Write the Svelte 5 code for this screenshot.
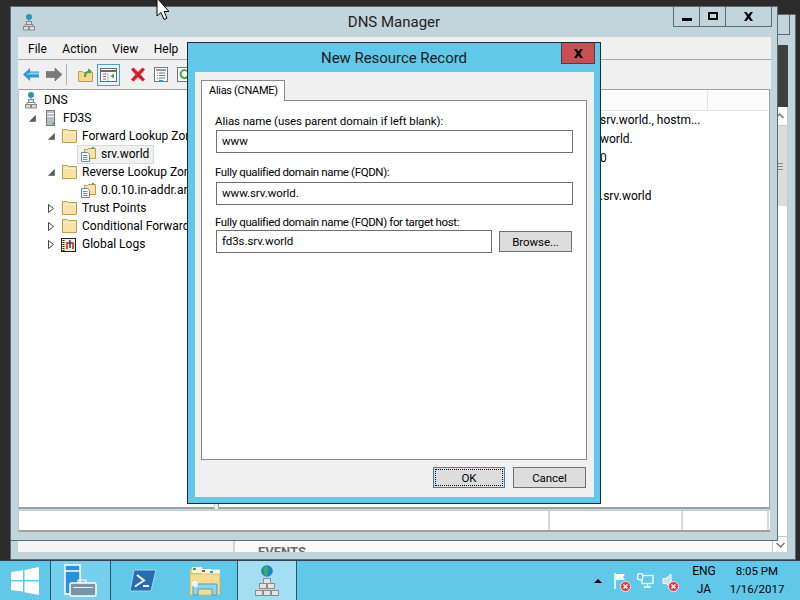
<script>
  const menus = ["File", "Action", "View", "Help"];
  const tree = [
    { label: "DNS", level: 0, icon: "dns" },
    { label: "FD3S", level: 1, icon: "server", exp: "open" },
    { label: "Forward Lookup Zones", level: 2, icon: "folder", exp: "open" },
    { label: "srv.world", level: 3, icon: "zone", selected: true },
    { label: "Reverse Lookup Zones", level: 2, icon: "folder", exp: "open" },
    { label: "0.0.10.in-addr.arpa", level: 3, icon: "zone" },
    { label: "Trust Points", level: 2, icon: "folder", exp: "closed" },
    { label: "Conditional Forwarders", level: 2, icon: "folder", exp: "closed" },
    { label: "Global Logs", level: 2, icon: "logs", exp: "closed" }
  ];
  const records = ["srv.world., hostm...", "world.", "0", "", ".srv.world"];
</script>

{#snippet dnsIcon()}
  <svg width="12" height="17" viewBox="0 0 12 17">
    <circle cx="6" cy="3" r="3" fill="#2f8fd0" />
    <path d="M4 2l2-1.5 1 1.5-1 2z" fill="#3aa845" />
    <path d="M6 6v3M2 12v-1.5h8V12" stroke="#8a8a8a" fill="none" />
    <rect x="3.5" y="7.5" width="5" height="3" fill="#ddd" stroke="#8a8a8a" />
    <rect x="0.5" y="12.5" width="5" height="3.5" fill="#ddd" stroke="#8a8a8a" />
    <rect x="6.5" y="12.5" width="5" height="3.5" fill="#ddd" stroke="#8a8a8a" />
  </svg>
{/snippet}

{#snippet folderIcon()}
  <svg width="15" height="14" viewBox="0 0 15 14">
    <path d="M.5 .5h5l1 1h8v12H.5z" fill="#f7e3a4" stroke="#b99c58" />
    <path d="M1.5 3.500h12" stroke="#fdf4d2" />
  </svg>
{/snippet}

{#snippet zoneIcon()}
  <svg width="15" height="16" viewBox="0 0 15 16">
    <path d="M3.5 3.5h3l1-1h7v10h-11z" fill="#f7e3a4" stroke="#b99c58" />
    <rect x="11" y="1" width="2" height="1.5" fill="#2f8fd0" />
    <path d="M.5 6.5h6l2 2v7h-8z" fill="#fff" stroke="#6d88a8" />
    <path d="M2 9.5h4.500M2 11.500h4.500M2 13.500h4.500" stroke="#6d88a8" />
  </svg>
{/snippet}

{#snippet serverIcon()}
  <svg width="9" height="16" viewBox="0 0 9 16">
    <rect x=".5" y=".5" width="8" height="15" fill="#b9bec2" stroke="#767b80" />
    <path d="M1 3.500h7M1 6.500h7" stroke="#f2f2f2" />
    <rect x="6" y="12.500" width="2" height="2" fill="#4cc04c" />
  </svg>
{/snippet}

{#snippet logsIcon()}
  <svg width="16" height="15" viewBox="0 0 16 15">
    <rect x=".5" y="1.500" width="14" height="13" fill="#f6efcb" stroke="#222" />
    <path d="M2.500 1v13" stroke="#222" stroke-dasharray="1 1" stroke-width="2" />
    <path d="M6 12V6h6v6" stroke="#c8201c" stroke-width="1.500" fill="none" />
    <path d="M9 3v8" stroke="#1c3fbf" stroke-width="1.500" />
  </svg>
{/snippet}

{#snippet closeGlyph()}
  <svg width="11" height="9" viewBox="0 0 11 9">
    <path d="M1 0h2.500l2 2.500 2-2.500H10L7 4.500 10 9H7.500l-2-2.500-2 2.500H1L4 4.500z" fill="#000" />
  </svg>
{/snippet}

{#snippet badge()}
  <svg class="badge" width="11" height="11" viewBox="0 0 11 11">
    <circle cx="5.500" cy="5.500" r="5" fill="#e0383c" stroke="#fff" stroke-width=".8" />
    <path d="M3.500 3.500l4 4M7.500 3.500l-4 4" stroke="#fff" stroke-width="1.500" />
  </svg>
{/snippet}

<div class="desktop">
  <div class="area">
    <section class="win back">
      <div class="back-caption"><span class="back-btn"></span><span class="back-btn wide"></span></div>
      <div class="back-client">
        <div class="banner"></div>
        <div class="back-body">
          <div class="back-main">
            <div class="back-nav"></div>
            <div class="back-content"><h3>EVENTS</h3></div>
          </div>
          <div class="vscroll">
            <div class="sb-up">
              <svg width="9" height="6" viewBox="0 0 9 6"><path d="M.5 5l4-4 4 4" fill="none" stroke="#777" stroke-width="1.500" /></svg>
            </div>
            <div class="sb-thumb"><span class="grip"></span></div>
            <div class="sb-track"></div>
            <div class="sb-down">
              <svg width="9" height="6" viewBox="0 0 9 6"><path d="M.5 1l4 4 4-4" fill="none" stroke="#777" stroke-width="1.500" /></svg>
            </div>
          </div>
        </div>
      </div>
    </section>

    <section class="win front">
      <header class="titlebar">
        <span class="app-icon">{@render dnsIcon()}</span>
        <span class="title">DNS Manager</span>
        <div class="captions">
          <span class="cap min"><i></i></span>
          <span class="cap max"><i></i></span>
          <span class="cap close">{@render closeGlyph()}</span>
        </div>
      </header>
      <div class="client">
        <nav class="menubar">
          {#each menus as m}<span>{m}</span>{/each}
        </nav>
        <div class="toolbar">
          <span class="tb">
            <svg width="16" height="13" viewBox="0 0 16 13"><path d="M0 6.500L7 0v3.500h9v6H7V13z" fill="#2f96dc" /><path d="M7 4.500h9v2H3z" fill="#8fd0f5" /></svg>
          </span>
          <span class="tb">
            <svg width="16" height="13" viewBox="0 0 16 13"><path d="M16 6.500L9 0v3.500H0v6h9V13z" fill="#7a7a7a" stroke="#5c5c5c" stroke-width=".5" /></svg>
          </span>
          <span class="tb-sep"></span>
          <span class="tb">
            <svg width="15" height="15" viewBox="0 0 15 15"><path d="M.5 4.500h4l1 1h9v9H.5z" fill="#f2d98e" stroke="#b99c58" /><path d="M6 10c0-4 2-6 4-6V1.500L14 4l-3 3V5.500c-2 .5-3 2-3 4.500z" fill="#3aa845" /></svg>
          </span>
          <span class="tb active">
            <svg width="17" height="14" viewBox="0 0 17 14">
              <rect x=".5" y=".5" width="16" height="13" fill="#fff" stroke="#6a6a6a" />
              <path d="M1 3h15" stroke="#6a6a6a" stroke-width="2" />
              <path d="M3 6h3M3 8.500h3M3 11h3" stroke="#6a6a6a" />
              <path d="M8 5v8" stroke="#aaa" />
              <path d="M14 5.500v5L10.500 8z" fill="#3aa845" />
            </svg>
          </span>
          <span class="tb gap">
            <svg width="16" height="15" viewBox="0 0 16 15"><path d="M1 2.500L3.500.5 8 5l4.500-4.500L15 2.500 10.500 7.500 15 12.500 12.500 14.500 8 10l-4.500 4.500L1 12.500l4.500-5z" fill="#dc1e24" /></svg>
          </span>
          <span class="tb">
            <svg width="14" height="15" viewBox="0 0 14 15"><rect x=".5" y=".5" width="13" height="14" fill="#fff" stroke="#777" /><path d="M2 3h10" stroke="#999" stroke-width="2" /><path d="M3 6h1M5 6h6M3 8.500h1M5 8.500h6M3 11h1M5 11h6" stroke="#5a7ba0" /><path d="M5 14h4" stroke="#2f96dc" stroke-width="2" /></svg>
          </span>
          <span class="tb">
            <svg width="15" height="15" viewBox="0 0 15 15"><rect x=".5" y=".5" width="14" height="14" fill="#fff" stroke="#777" /><path d="M11 5a4 4 0 1 0 .5 3" fill="none" stroke="#3aa845" stroke-width="2" /></svg>
          </span>
        </div>
        <div class="panes">
          <div class="tree">
            {#each tree as row}
              <div class="row" style="padding-left: {1 + 19 * row.level}px">
                <span class="exp">
                  {#if row.exp === "open"}
                    <svg width="7" height="7" viewBox="0 0 7 7"><path d="M6.500.500v6h-6z" fill="#595959" stroke="#595959" stroke-width=".6" /></svg>
                  {:else if row.exp === "closed"}
                    <svg width="6" height="9" viewBox="0 0 6 9"><path d="M.5.500l5 4-5 4z" fill="#fff" stroke="#444" /></svg>
                  {/if}
                </span>
                <span class="item" class:selected={row.selected}>
                  <span class="ico">
                    {#if row.icon === "dns"}{@render dnsIcon()}
                    {:else if row.icon === "server"}{@render serverIcon()}
                    {:else if row.icon === "folder"}{@render folderIcon()}
                    {:else if row.icon === "zone"}{@render zoneIcon()}
                    {:else}{@render logsIcon()}{/if}
                  </span>
                  <span>{row.label}</span>
                </span>
              </div>
            {/each}
          </div>
          <div class="splitter"></div>
          <div class="list">
            <div class="list-head"><span class="hcol"></span></div>
            {#each records as rec}
              <div class="rec">{rec}</div>
            {/each}
          </div>
        </div>
        <div class="status">
          <span class="s1"></span><span class="s2"></span><span class="s3"></span>
        </div>
      </div>
    </section>

    <section class="dialog">
      <header class="dlg-title">
        <span>New Resource Record</span>
        <span class="dlg-close">{@render closeGlyph()}</span>
      </header>
      <div class="dlg-client">
        <div class="tabs"><span class="tab">Alias (CNAME)</span></div>
        <div class="tabpanel">
          <label class="field">
            <span>Alias name (uses parent domain if left blank):</span>
            <input value="www" readonly />
          </label>
          <label class="field f2">
            <span>Fully qualified domain name (FQDN):</span>
            <input value="www.srv.world." readonly />
          </label>
          <div class="field f3">
            <span>Fully qualified domain name (FQDN) for target host:</span>
            <div class="target">
              <input value="fd3s.srv.world" readonly />
              <button>Browse...</button>
            </div>
          </div>
        </div>
        <div class="dlg-foot">
          <button class="default"><span>OK</span></button>
          <button class="cancel">Cancel</button>
        </div>
      </div>
    </section>

    <svg class="cursor" width="13" height="23" viewBox="0 0 13 23">
      <path d="M1 -2V16l4-3.500 3 7 3-1.300-3-6.700h5z" fill="#fff" stroke="#000" />
    </svg>
  </div>

  <footer class="taskbar">
    <div class="tk start">
      <svg width="28" height="28" viewBox="0 0 28 28">
        <path d="M0 5l12-1.800V13H0zM13.500 3L28 0v13H13.500zM0 14.500h12v10L0 23zM13.500 14.500H28V28l-14.500-2.800z" fill="#fff" />
      </svg>
    </div>
    <div class="tk sm">
      <svg width="33" height="33" viewBox="0 0 33 33">
        <rect x="1" y="1" width="15" height="29" fill="#2b8fdc" stroke="#fff" stroke-width="1.500" />
        <path d="M1 7h15" stroke="#fff" stroke-width="1.500" />
        <path d="M14 19v-3h8v3" fill="none" stroke="#fff" stroke-width="1.200" />
        <rect x="6" y="19" width="26" height="13" rx="1.500" fill="#7b93a6" stroke="#fff" stroke-width="1.500" />
        <path d="M9 23.500h20" stroke="#e8eef2" />
      </svg>
    </div>
    <div class="tk ps">
      <svg width="28" height="23" viewBox="0 0 28 23">
        <path d="M5 1h22l-5 21H1z" fill="#2a6cb0" stroke="#9ed8f2" />
        <path d="M8 6l7 5.500-9 6" fill="none" stroke="#fff" stroke-width="2" />
        <path d="M14 17h6" stroke="#fff" stroke-width="2" />
      </svg>
    </div>
    <div class="tk fm">
      <svg width="33" height="30" viewBox="0 0 33 30">
        <path d="M1 3h30v6H1z" fill="#e8c97c" />
        <rect x="3" y="1" width="10" height="6" fill="#fdf6dc" />
        <rect x="4" y="2" width="3" height="2" fill="#3aa845" />
        <rect x="12" y="3" width="10" height="6" fill="#fdf6dc" />
        <rect x="13" y="4" width="3" height="2" fill="#d8402c" />
        <rect x="20" y="4" width="11" height="5" fill="#fdf6dc" />
        <rect x="21" y="5" width="3" height="2" fill="#2f96dc" />
        <path d="M1 8h30v21H1z" fill="#f6dc8e" stroke="#c6a55c" stroke-width=".6" />
        <path d="M4 29V18h24v11h-5v-6H9v6z" fill="#8fd4ee" stroke="#4f9fc4" />
        <circle cx="6" cy="18" r="3" fill="#fff" opacity=".85" />
      </svg>
    </div>
    <div class="tk dnsapp">
      <svg width="24" height="32" viewBox="0 0 24 32">
        <circle cx="12" cy="6" r="5.800" fill="#1f7fcf" />
        <path d="M8 3l4-2 2 3-2 3 1 3-3 1-1-4z" fill="#3fb24a" />
        <g fill="#e4e4e4" stroke="#8d8d8d">
          <rect x="8.500" y="13.500" width="7" height="5" />
          <rect x="4.500" y="18.500" width="7" height="5" />
          <rect x="12.500" y="18.500" width="7" height="5" />
          <rect x=".5" y="25.500" width="7" height="5" />
          <rect x="8.500" y="25.500" width="7" height="5" />
          <rect x="16.500" y="25.500" width="7" height="5" />
        </g>
      </svg>
    </div>
    <div class="tray">
      <svg class="caret" width="8" height="4" viewBox="0 0 8 4"><path d="M0 4l4-4 4 4z" fill="#000" /></svg>
      <span class="ticon flag">
        <svg width="12" height="16" viewBox="0 0 12 16"><path d="M1 0v16" stroke="#fff" stroke-width="1.500" /><path d="M2 1h9l-2 3 2 3H2z" fill="#fff" /></svg>
        {@render badge()}
      </span>
      <span class="ticon">
        <svg width="17" height="16" viewBox="0 0 17 16"><rect x="5" y="2.500" width="11" height="8" fill="none" stroke="#fff" stroke-width="1.300" /><path d="M10.500 11v2M7 14h7" stroke="#fff" stroke-width="1.300" /><rect x=".7" y=".7" width="5" height="6" rx="1" fill="#62c8ea" stroke="#fff" stroke-width="1.300" /></svg>
      </span>
      <span class="ticon spk">
        <svg width="12" height="16" viewBox="0 0 12 16"><path d="M1 5.500h3L9 1v14L4 10.500H1z" fill="#d4dde2" stroke="#fff" /></svg>
        {@render badge()}
      </span>
      <div class="lang"><span>ENG</span><span>JA</span></div>
      <div class="clock"><span>8:05 PM</span><span>1/16/2017</span></div>
    </div>
  </footer>
</div>

<style>
  :global(body) {
    margin: 0;
    background: #2b2b2b;
  }

  .desktop {
    width: 800px;
    height: 600px;
    display: flex;
    flex-direction: column;
    overflow: hidden;
    background: #2b2b2b;
    font-family: Roboto, "Open Sans", sans-serif;
    font-size: 12px;
    color: #000;
  }

  .area {
    flex: 1;
    position: relative;
  }

  .win {
    position: absolute;
    box-sizing: border-box;
    background: #c3d5dc;
    border: 1px solid #5c6a72;
    display: flex;
    flex-direction: column;
  }

  /* window behind */
  .back {
    left: 10px;
    top: 14px;
    width: 786px;
    height: 546px;
  }

  .back-caption {
    height: 20px;
    display: flex;
    justify-content: flex-end;
    padding-right: 5px;
    margin-bottom: 10px;
  }

  .back-btn {
    width: 26px;
    border: 1px solid #5c6a72;
    border-top: 0;
  }

  .back-btn.wide {
    width: 46px;
    margin-left: -1px;
  }

  .back-client {
    flex: 1;
    margin: 0 7px 7px;
    display: flex;
    flex-direction: column;
    min-height: 0;
  }

  .banner {
    height: 62px;
    background: #3f3f3f;
  }

  .back-body {
    flex: 1;
    display: flex;
    min-height: 0;
  }

  .back-main {
    flex: 1;
    display: flex;
    background: #fafafa;
    min-width: 0;
  }

  .back-nav {
    width: 215px;
    background: #f5f5f5;
    border-right: 2px solid #d4d4d4;
  }

  .back-content {
    flex: 1;
    display: flex;
    flex-direction: column;
    justify-content: flex-end;
    overflow: hidden;
    padding-left: 23px;
  }

  .back-content h3 {
    margin: 0 0 -8px;
    font-size: 13px;
    line-height: 16px;
    font-weight: 700;
    color: #6b6b6b;
  }

  .vscroll {
    width: 15px;
    display: flex;
    flex-direction: column;
    background: #fff;
    border-right: 1px solid #c8c8c8;
  }

  .sb-up,
  .sb-down {
    display: flex;
    align-items: center;
    justify-content: center;
    background: #fff;
  }

  .sb-up {
    height: 18px;
    border-bottom: 1px solid #c8c8c8;
  }

  .sb-down {
    height: 15px;
    border-top: 1px solid #c8c8c8;
    border-left: 1px solid #c8c8c8;
  }

  .sb-thumb {
    height: 80px;
    background: #dcdcdc;
    display: flex;
    align-items: center;
    justify-content: center;
  }

  .grip {
    width: 7px;
    height: 7px;
    background: repeating-linear-gradient(#8b8b8b 0 1px, transparent 1px 3px);
  }

  .sb-track {
    flex: 1;
  }

  /* DNS Manager */
  .front {
    left: 10px;
    top: 6px;
    width: 768px;
    height: 535px;
  }

  .titlebar {
    height: 30px;
    position: relative;
    flex: none;
    display: flex;
    align-items: center;
    justify-content: center;
  }

  .title {
    font-size: 15px;
    color: #222;
  }

  .app-icon {
    position: absolute;
    left: 12px;
    top: 7px;
  }

  .captions {
    position: absolute;
    top: -1px;
    right: 5px;
    display: flex;
    height: 21px;
  }

  .cap {
    box-sizing: border-box;
    width: 27px;
    margin-left: -1px;
    border: 1px solid #5c6a72;
    border-top: 0;
    display: flex;
    align-items: center;
    justify-content: center;
  }

  .cap.close {
    width: 47px;
  }

  .cap.min i {
    width: 10px;
    height: 3px;
    margin-top: 6px;
    background: #000;
  }

  .cap.max i {
    box-sizing: border-box;
    width: 10px;
    height: 8px;
    border: 2px solid #000;
  }

  .client {
    flex: 1;
    margin: 0 6px 8px 7px;
    display: flex;
    flex-direction: column;
    min-height: 0;
  }

  .menubar {
    box-sizing: border-box;
    height: 23px;
    flex: none;
    background: #f0f0f0;
    border-bottom: 1px solid #a9a9a9;
    display: flex;
    align-items: center;
    gap: 15.500px;
    padding: 1px 0 0 10px;
  }

  .toolbar {
    height: 29px;
    flex: none;
    background: #f0f0f0;
    display: flex;
    align-items: center;
    padding-left: 1.500px;
  }

  .tb {
    box-sizing: border-box;
    width: 23px;
    height: 22px;
    display: flex;
    align-items: center;
    justify-content: center;
  }

  .tb.active {
    background: #e6f3fb;
    border: 1px solid #4f9fd0;
  }

  .tb.gap {
    margin-left: 7px;
  }

  .tb-sep {
    width: 1px;
    height: 21px;
    background: #b0b0b0;
    margin-right: 7px;
  }

  .panes {
    flex: 1;
    display: flex;
    min-height: 0;
  }

  .tree,
  .list {
    box-sizing: border-box;
    background: #fff;
    border: 1px solid #a0a0a0;
    border-bottom-width: 2px;
    overflow: hidden;
  }

  .tree {
    width: 196px;
    padding-top: 1px;
    border-right: 0;
    border-left-color: #c8c8c8;
  }

  .splitter {
    width: 3px;
    background: #f0f0f0;
    border-left: 1px solid #c8c8c8;
  }

  .list {
    flex: 1;
    margin-right: 1px;
  }

  .list-head {
    height: 19px;
    margin: 1px 1px 0 0;
    background: #fbfbfb;
    border-bottom: 1px solid #e3e3e3;
    display: flex;
    justify-content: flex-end;
  }

  .hcol {
    width: 60px;
    border-left: 1px solid #e3e3e3;
  }

  .rec {
    height: 19px;
    line-height: 19px;
    padding-left: 381px;
    white-space: nowrap;
  }

  .row {
    height: 18px;
    display: flex;
    align-items: center;
    white-space: nowrap;
  }

  .exp {
    flex: none;
    box-sizing: border-box;
    width: 13px;
    padding-left: 3px;
    margin-left: -13px;
    display: flex;
    align-items: center;
  }

  .item {
    box-sizing: border-box;
    height: 19px;
    display: flex;
    align-items: center;
    gap: 5px;
    padding: 0 4px 0 2px;
    border: 1px solid transparent;
  }

  .item.selected {
    background: #f0f0f0;
    border-color: #d9d9d9;
  }

  .ico {
    width: 16px;
    height: 17px;
    display: flex;
    align-items: center;
    justify-content: center;
  }

  .status {
    height: 21px;
    flex: none;
    margin-top: 2px;
    margin-right: 1px;
    box-sizing: border-box;
    background: #fff;
    border-bottom: 2px solid #a0a0a0;
    border-left: 1px solid #c8c8c8;
    display: flex;
  }

  .status span {
    border-right: 2px solid #d8d8d8;
  }

  .s1 {
    width: 529px;
  }

  .s2 {
    width: 131px;
  }

  .s3 {
    width: 84px;
  }

  /* dialog */
  .dialog {
    position: absolute;
    left: 187px;
    top: 42px;
    box-sizing: border-box;
    width: 414px;
    height: 462px;
    background: #62c8ea;
    border: 1px solid #1d2b33;
    display: flex;
    flex-direction: column;
  }

  .dlg-title {
    height: 29px;
    flex: none;
    position: relative;
    display: flex;
    align-items: center;
    justify-content: center;
    font-size: 15px;
    letter-spacing: -0.05px;
    color: #1a1a1a;
    padding-top: 1px;
    box-sizing: border-box;
  }

  .dlg-close {
    position: absolute;
    right: 5px;
    top: -1px;
    box-sizing: border-box;
    width: 34px;
    height: 22px;
    background: #c75050;
    border: 1px solid #5a3a3a;
    border-top-color: #1d2b33;
    display: flex;
    align-items: center;
    justify-content: center;
  }

  .dlg-client {
    flex: 1;
    margin: 0 6px 6px 7px;
    background: #f0f0f0;
    padding: 8px 7px 0 6px;
    display: flex;
    flex-direction: column;
    min-height: 0;
    font-size: 11.500px;
    letter-spacing: -0.07px;
  }

  .tabs {
    height: 20px;
    display: flex;
    flex: none;
  }

  .tab {
    box-sizing: border-box;
    width: 84px;
    height: 21px;
    padding-left: 7px;
    font-size: 11px;
    letter-spacing: -0.3px;
    line-height: 19px;
    white-space: nowrap;
    background: #fff;
    border: 1px solid #898989;
    border-bottom: 0;
    position: relative;
    z-index: 1;
  }

  .tabpanel {
    height: 360px;
    box-sizing: border-box;
    background: #fff;
    border: 1px solid #898989;
    padding: 11px 13px 0 14px;
  }

  .field {
    display: block;
  }

  .field > span {
    display: block;
    height: 16px;
    line-height: 18px;
    margin: 0 0 2px -1px;
    white-space: nowrap;
  }

  .f2 {
    margin-top: 10px;
  }

  .f2 > span {
    margin-bottom: 3px;
    letter-spacing: -0.37px;
  }

  .f3 {
    margin-top: 8px;
  }

  .f3 > span {
    margin-bottom: 1px;
    letter-spacing: -0.37px;
  }

  input {
    display: block;
    box-sizing: border-box;
    width: 357px;
    height: 23px;
    padding: 0 5px 2px;
    margin: 0;
    border: 1px solid #707070;
    border-radius: 0;
    outline: none;
    background: #fff;
    font: inherit;
    letter-spacing: inherit;
    color: #000;
  }

  .target {
    display: flex;
    gap: 7px;
  }

  .target input {
    width: 276px;
  }

  button {
    box-sizing: border-box;
    height: 21px;
    padding: 0;
    background: #dddddd;
    border: 1px solid #707070;
    border-radius: 0;
    font: inherit;
    letter-spacing: inherit;
    color: #000;
  }

  .target button {
    width: 73px;
    margin-top: 1px;
  }

  .dlg-foot {
    flex: none;
    display: flex;
    justify-content: flex-end;
    gap: 8px;
    margin-top: 7px;
    padding-right: 1px;
  }

  .default {
    width: 72px;
    border-color: #3c7fb1;
    padding: 1px;
  }

  .default span {
    display: block;
    height: 100%;
    box-sizing: border-box;
    border: 1px dotted #000;
    line-height: 17px;
  }

  .cancel {
    width: 73px;
    padding-top: 1px;
  }

  .cursor {
    position: absolute;
    left: 156px;
    top: 0;
  }

  /* taskbar */
  .taskbar {
    height: 40px;
    flex: none;
    box-sizing: border-box;
    background: #62c8ea;
    border-top: 1px solid #2b4452;
    display: flex;
    align-items: stretch;
  }

  .tk {
    box-sizing: border-box;
    display: flex;
    align-items: center;
    justify-content: center;
    width: 60px;
  }

  .tk.start {
    width: 51px;
    border-right: 1px solid #2b5568;
  }

  .tk.sm {
    width: 60px;
    border-right: 1px solid #2b5568;
    background: #76cfec;
  }

  .tk.ps {
    width: 63px;
  }

  .tk.fm {
    width: 63px;
  }

  .tk.dnsapp {
    width: 60px;
    background: #a5ddf2;
    border-left: 1px solid #2b5568;
    border-right: 1px solid #2b5568;
  }

  .tray {
    flex: 1;
    display: flex;
    align-items: center;
    padding-left: 297px;
  }

  .caret {
    flex: none;
  }

  .ticon {
    position: relative;
    display: flex;
    margin-left: 11px;
  }

  .ticon.flag {
    margin-left: 12px;
  }

  .ticon.spk {
    margin-left: 8px;
  }

  .badge {
    position: absolute;
    right: -5px;
    bottom: -3px;
  }

  .lang,
  .clock {
    display: flex;
    flex-direction: column;
    align-items: center;
    gap: 1px;
    line-height: 17px;
    white-space: nowrap;
  }

  .lang {
    width: 28px;
    margin-left: 16px;
  }

  .clock {
    width: 60px;
    margin-left: 9px;
    font-size: 11.500px;
  }
</style>
